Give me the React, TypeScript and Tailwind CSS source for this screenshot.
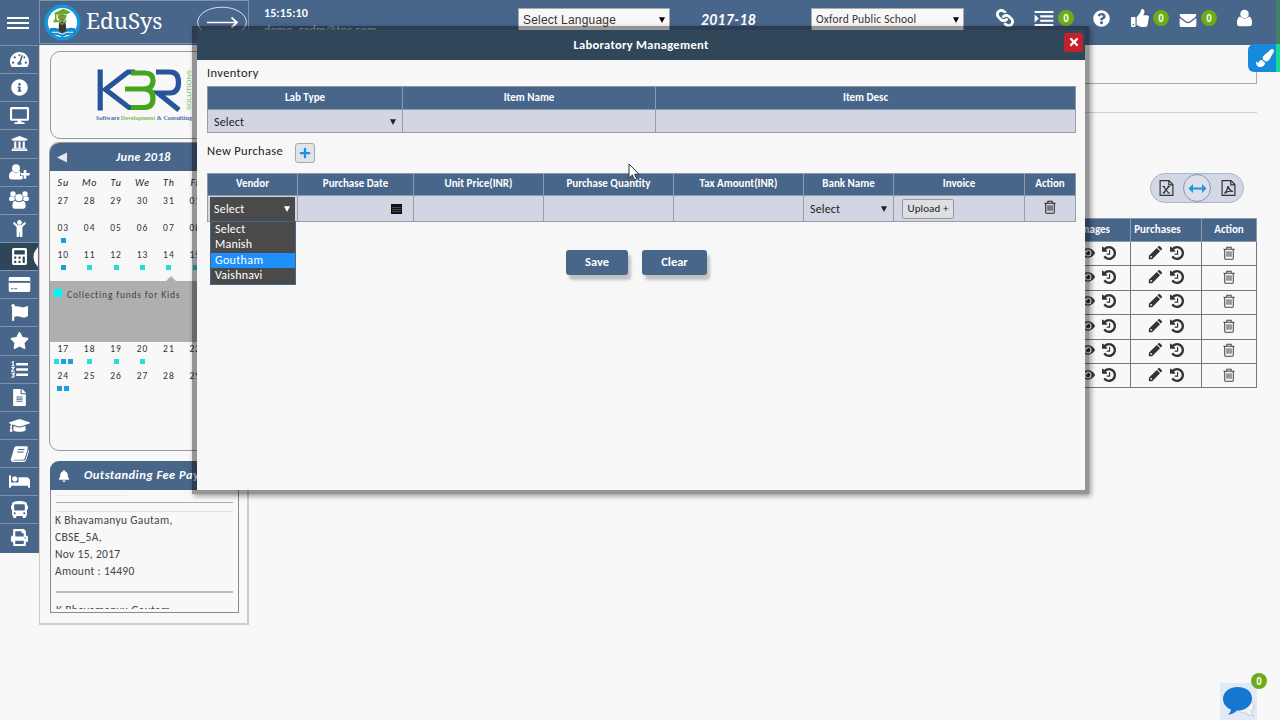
import React from "react";
import {
  FaTachometerAlt, FaInfoCircle, FaDesktop, FaUniversity, FaChild, FaCalculator,
  FaFlag, FaStar, FaFileAlt, FaGraduationCap, FaBed, FaBus, FaPrint, FaLink,
  FaQuestionCircle, FaThumbsUp, FaPaintBrush, FaEye, FaBell, FaPlus, FaTimes,
} from "react-icons/fa";

type IconProps = { className?: string };

function TiltedBook({ className }: IconProps) {
  return (
    <svg viewBox="0 0 20 18" className={className} fill="currentColor">
      <path d="M7 1.2h10.2c1.3 0 2 .9 1.600 2.200l-3 10.400c-.3 1.100-1 1.700-2.100 1.700H4.200c-.7 0-.9.9-.1.900h10.200c1.300 0 2-.7 2.300-1.700l2.900-9.600c.6.700.5 1.300.3 2l-2.600 8.600c-.4 1.400-1.500 2.300-3 2.300H3.500C1.600 18 .6 16.600 1 14.900L4.300 3.300C4.700 2 5.600 1.200 7 1.200z" />
      <path d="M8.300 4.700h7M7.500 7.400h7" stroke="#48658a" strokeWidth="1.100" />
    </svg>
  );
}

function Bin({ className }: IconProps) {
  return (
    <svg viewBox="0 0 14 16" className={className} fill="none" stroke="currentColor" strokeWidth="1.200">
      <path d="M.5 3.500h13M4.500 3.500V1.200h5v2.300M2 3.500V14q0 1.300 1.300 1.300h7.400Q12 15.300 12 14V3.500M4.700 6v6.500M7 6v6.500M9.300 6v6.500" />
    </svg>
  );
}

function History({ className }: IconProps) {
  return (
    <svg viewBox="128 128 1536 1536" className={className} fill="currentColor">
      <path d="M1664 896q0 156-61 298t-164 245-245 164-298 61q-172 0-327-72.500t-264-204.500q-7-10-6.500-22.500t8.500-20.500l137-138q10-9 25-9 16 2 23 12 73 95 179 147t225 52q104 0 198.500-40.500t163.500-109.500 109.500-163.500 40.500-198.500-40.500-198.500-109.500-163.500-163.500-109.500-198.500-40.500q-98 0-188 35.500t-160 101.500l137 138q31 30 14 69-17 40-59 40h-448q-26 0-45-19t-19-45v-448q0-42 40-59 39-17 69 14l130 129q107-101 244.500-156.500t284.500-55.500q156 0 298 61t245 164 164 245 61 298zm-640-288v448q0 14-9 23t-23 9h-320q-14 0-23-9t-9-23v-64q0-14 9-23t23-9h224v-352q0-14 9-23t23-9h64q14 0 23 9t9 23z" />
    </svg>
  );
}

function Pencil({ className }: IconProps) {
  return (
    <svg viewBox="0 0 16 16" className={className} fill="currentColor">
      <path d="M1 11.200L10 2.200 13.800 6l-9 9H1zM2.300 12l1.700 1.700 1-1L3.300 11zM10.800 1.400l1-1q.9-.7 1.800 0l2 2q.8.9 0 1.800l-1 1z" fillRule="evenodd" />
    </svg>
  );
}

function Person({ className }: IconProps) {
  return (
    <svg viewBox="0 0 18 18" className={className} fill="currentColor">
      <circle cx="9" cy="4.800" r="4.500" />
      <path d="M4.200 7.500Q1 8.500 1 14.500 1 17.700 4 17.700h10q3 0 3-3.200 0-6-3.200-7Q9 12 4.200 7.500z" />
    </svg>
  );
}

function PersonAdd({ className }: IconProps) {
  return (
    <svg viewBox="0 0 21 16" className={className} fill="currentColor">
      <circle cx="7" cy="4.300" r="4" />
      <path d="M3.300 7Q0 8 0 12.500 0 15.500 2.700 15.500h9q1.300 0 2-.8V12H11V8.500h1Q11 7 10.700 7 7 10.500 3.300 7zM14.700 6h2.600v3H20.500v2.600h-3.200v3.200h-2.600v-3.200h-3V9h3z" />
    </svg>
  );
}

function People({ className }: IconProps) {
  return (
    <svg viewBox="0 0 20 18" className={className} fill="currentColor">
      <circle cx="4" cy="2.900" r="2.700" /><circle cx="16" cy="2.900" r="2.700" />
      <path d="M1.800 5.200Q0 5.500 0 8.300 0 10 1.600 10h2.700Q5 9 6 8.700 5 7 5.600 5.200 3.500 6.500 1.800 5.200zM18.200 5.200Q20 5.500 20 8.300 20 10 18.400 10h-2.700Q15 9 14 8.700 15 7 14.400 5.200 16.500 6.500 18.200 5.200z" />
      <circle cx="10" cy="6.600" r="3.700" />
      <path d="M6.200 9.700Q3.400 10 3.400 15q0 2.800 2.600 2.800h8q2.600 0 2.600-2.800 0-5-2.800-5.300Q10 13 6.200 9.700z" />
    </svg>
  );
}

function Card({ className }: IconProps) {
  return (
    <svg viewBox="0 0 23 16" className={className}>
      <rect width="23" height="16" rx="1.500" fill="currentColor" />
      <path d="M0 5.200h23" stroke="#48658a" strokeWidth="2" /><path d="M2.500 12.500h2.500M6 12.500h3" stroke="#48658a" />
    </svg>
  );
}

function Numbered({ className }: IconProps) {
  return (
    <svg viewBox="0 0 18 18" className={className} fill="none" stroke="currentColor">
      <path d="M5.500 3.500H18M5.500 9H18M5.500 14.500H18" strokeWidth="2.700" />
      <path d="M.8 1.500L2.300.8V5M.5 5h3.400M.5 7h2.600L.8 10.800H4M.5 13h3L2 14.500q1.800 0 1.500 1.500-.5 1.500-3 .8" strokeWidth="1.200" />
    </svg>
  );
}

function IndentLines({ className }: IconProps) {
  return (
    <svg viewBox="0 0 20 16" className={className} fill="currentColor">
      <path d="M0 0h20v2.200H0zM6 4.600h14v2.200H6zM6 9.200h14v2.200H6zM0 13.800h20V16H0zM0 3.700L4.500 8 0 12.300z" />
    </svg>
  );
}

function Mail({ className }: IconProps) {
  return (
    <svg viewBox="0 0 18 14" className={className} fill="currentColor">
      <path d="M1 0h16q1 0 1 1.300-.3 1.500-2 2.700L11 7.800q-2 1.300-4 0L2 4Q.2 2.700 0 1.300 0 0 1 0zM0 4.200l6.500 4.900q2.500 1.500 5 0L18 4.200V12.500Q18 14 16.500 14h-15Q0 14 0 12.500z" />
    </svg>
  );
}

function Doc({ className, children }: IconProps & { children?: React.ReactNode }) {
  return (
    <svg viewBox="0 0 14 16" className={className} fill="none" stroke="currentColor" strokeWidth="1.200">
      <path d="M.6.600h8.900l3.900 3.900v10.900H.6zM9.300.8v4h4" />
      {children}
    </svg>
  );
}

const Tri = ({ className }: IconProps) => (
  <svg viewBox="0 0 6 6" className={"h-[6px] w-[6px] " + (className || "")} fill="currentColor"><path d="M0 .3h6L3 6z" /></svg>
);

const sidebar = [
  FaTachometerAlt, FaInfoCircle, FaDesktop, FaUniversity, PersonAdd, People, FaChild, FaCalculator,
  Card, FaFlag, FaStar, Numbered, FaFileAlt, FaGraduationCap, TiltedBook, FaBed, FaBus, FaPrint,
];

function Badge({ className }: IconProps) {
  return (
    <span className={"flex h-4 w-4 items-center justify-center rounded-full bg-[#6dab18] font-['Liberation_Sans'] text-[10px] font-bold text-white " + (className || "")}>0</span>
  );
}

function Header() {
  return (
    <header className="flex h-[45px] shrink-0 bg-[#48658a] text-white">
      <div className="flex w-[39px] flex-col gap-[3px] pl-[7px] pt-[17px]">
        <i className="h-[2px] w-[22px] bg-white" /><i className="h-[2px] w-[22px] bg-white" /><i className="h-[2px] w-[22px] bg-white" />
      </div>
      <div className="flex h-[44px] w-[210px] border border-[#8194ae] pl-[4px]">
        <svg viewBox="0 0 38 38" className="mt-[3px] h-[37px] w-[37px]">
          <circle cx="19" cy="19" r="18.500" fill="#1795dc" /><circle cx="19" cy="19" r="15" fill="#fff" />
          <path d="M6 25q7-2 12.500 3Q25 23 32 25v7q-7-2-13 2-6-4-13-2z" fill="#1686c8" />
          <path d="M7.500 23q6-.5 11 3.500 5-4 11-3.500M8 29q6-1 10.500 2Q24 28 30 29" fill="none" stroke="#fff" strokeWidth="1" />
          <path d="M15.500 18h6.500l1 9-4.300 3-3.700-3z" fill="#3c3530" />
          <circle cx="18.500" cy="14" r="3.600" fill="#9b704e" />
          <path d="M10 9.500L20 5l7.500 3.500-9 4.500z M14 11v3.500q4 2 9-.5V10.500" fill="#5fae26" />
          <path d="M12 10v5l-1.500 3h3L12 15M14 17l4.500 4 4.500-4" fill="none" stroke="#5fae26" strokeWidth="1.400" />
        </svg>
        <span className="ml-[5px] mt-[4px] w-[111px] font-['Noto_Serif','DejaVu_Serif',serif] text-[22.500px] leading-[32px] tracking-[-0.050px]">EduSys</span>
        <svg viewBox="0 0 50 32" className="mt-[5px] h-[32px] w-[50px]" fill="none" stroke="#fff">
          <ellipse cx="25" cy="16" rx="24.300" ry="14.800" strokeWidth=".8" />
          <path d="M10 16.500h29M34.500 11.500l5.500 5-5.500 5" strokeWidth="1.700" />
        </svg>
      </div>
      <div className="ml-[15px] w-[254px] pt-[5px] leading-[16px]">
        <div className="text-[12px] font-bold tracking-[0.100px]">15:15:10</div>
        <div className="pt-px text-[12px] tracking-[0.100px] text-[#c0cad8]">demo_cadm@tnc.com</div>
      </div>
      <div className="mt-[8px] flex h-[24px] w-[152px] items-center justify-between border border-[#aaa] bg-[#f8f8f8] px-[4px] font-['Liberation_Sans'] text-[12px] tracking-[0.200px] text-[#333]">
        Select Language <Tri className="text-black" />
      </div>
      <div className="w-[141px] pl-[31px] pt-[10px] text-[15px] font-bold italic leading-[20px] tracking-[0.700px]">2017-18</div>
      <div className="mt-[8px] flex h-[24px] w-[153px] items-center justify-between border border-[#aaa] bg-[#f8f8f8] px-[4px] text-[11.500px] tracking-[0.220px] text-[#333]">
        Oxford Public School <Tri className="text-black" />
      </div>
      <div className="ml-[32px] flex h-[36px] items-center">
        <FaLink className="w-[18px] rotate-90 text-[18px]" />
        <IndentLines className="ml-[20px] h-[15px] w-[20px]" />
        <Badge className="ml-[4px]" />
        <FaQuestionCircle className="ml-[19px] text-[17px]" />
        <FaThumbsUp className="ml-[21px] text-[18px]" />
        <Badge className="ml-[4px]" />
        <Mail className="ml-[10px] mt-[4px] h-[13px] w-[18px]" />
        <Badge className="ml-[4px]" />
        <Person className="ml-[19px] h-[18px] w-[17px]" />
      </div>
      <i className="ml-auto w-[4px] bg-[#3f8066]" />
    </header>
  );
}

function Sidebar() {
  return (
    <nav className="h-[508px] w-[39px] shrink-0 border-r border-[#6b5a78] bg-[#48658a] text-white">
      {sidebar.map((Icon, i) => (
        <div key={i} className={"relative flex h-[28.150px] items-center justify-center border-t border-[#7f93ad] " + (i === 7 ? "bg-[#2f4659]" : "")}>
          <Icon className={i === 8 ? "h-[15px] w-[23px]" : i === 4 ? "h-[16px] w-[21px]" : i === 5 ? "h-[18px] w-[20px]" : i === 13 || i === 15 ? "h-[21px] w-[21px]" : "h-[17px] w-[19px]"} />
          {i === 7 && <svg viewBox="0 0 6 20" className="absolute right-0 top-[4px] h-[20px] w-[6px]"><path d="M6 0v20L3 16Q0 10 3 4z" fill="#f7f7f7" /></svg>}
        </div>
      ))}
    </nav>
  );
}

function School() {
  return (
    <div className="ml-[10px] mt-[6px] h-[88px] w-[190px] rounded-[10px] border border-[#999] pl-[45px] pt-[17px]">
      <svg viewBox="0 0 100 54" className="h-[54px] w-[100px] overflow-visible">
        <g fill="none" strokeWidth="5.200">
          <path d="M4.200 .5v41" stroke="#28549a" />
          <path d="M39 3H32L9.500 20.500 33 38.500h8" stroke="#28549a" />
          <path d="M60 3h14q8.500 0 8.500 10.500T74 24H62l21 17" stroke="#28549a" />
          <path d="M35 4h14q8 0 8 7.500 0 8.500-9 8.500H29h19q9 0 9 9.500 0 9-9 9H35" stroke="#45a51f" />
        </g>
        <text x="95" y="41" transform="rotate(-90 95 41)" textLength="40" lengthAdjust="spacingAndGlyphs" fontFamily="Lato" fontSize="6.500" fill="#6fb84c">SOLUTIONS</text>
        <text x="0" y="50.500" textLength="96" lengthAdjust="spacingAndGlyphs" fontFamily="Liberation Serif" fontWeight="bold" fontSize="6" fill="#4a6da6">Software <tspan fill="#7cbf55">Development</tspan> &amp; Consulting</text>
      </svg>
    </div>
  );
}

const C = "bg-[#25dce0]";
const B = "bg-[#1b9fe3]";
type Day = [string, string[]];
const weeks: Day[][] = [
  [["27", []], ["28", []], ["29", []], ["30", []], ["31", []], ["01", []], ["02", []]],
  [["03", [B]], ["04", []], ["05", []], ["06", []], ["07", []], ["08", []], ["09", []]],
  [["10", [B]], ["11", [C]], ["12", [C]], ["13", [C]], ["14", [C]], ["15", [C]], ["16", []]],
  [["17", [C, B, B]], ["18", [C]], ["19", [C]], ["20", [C]], ["21", []], ["22", []], ["23", []]],
  [["24", [B, B]], ["25", []], ["26", []], ["27", []], ["28", []], ["29", []], ["30", []]],
];

function Week({ days }: { days: Day[] }) {
  return (
    <div className="grid h-[27px] w-[185px] grid-cols-7">
      {days.map(([n, dots], i) => (
        <div key={i} className="flex flex-col items-center">
          <span className="h-[17px] text-[9.500px] leading-[15px] tracking-[1px] text-[#333]">{n}</span>
          <span className="flex gap-[2px]">{dots.map((d, k) => <i key={k} className={"h-[5px] w-[5px] " + d} />)}</span>
        </div>
      ))}
    </div>
  );
}

function Calendar() {
  return (
    <div className="ml-[9px] mt-[3px] h-[309px] w-[191px] overflow-hidden rounded-[10px] border border-[#999]">
      <div className="flex h-[28px] items-center bg-[#48658a] text-white">
        <svg viewBox="0 0 10 10" className="ml-[7px] h-[11px] w-[10px]" fill="#e3e6f3"><path d="M10 0v10L0 5z" /></svg>
        <span className="ml-[49px] text-[12.500px] font-bold italic tracking-[0.350px]">June 2018</span>
      </div>
      <div className="grid h-[23px] w-[185px] grid-cols-7 pt-[4px] text-center text-[10px] font-medium italic leading-[16px] tracking-[0.800px] text-[#222]">
        {["Su", "Mo", "Tu", "We", "Th", "Fr", "Sa"].map((d) => <span key={d}>{d}</span>)}
      </div>
      {weeks.slice(0, 3).map((w, i) => <Week key={i} days={w} />)}
      <div className="relative mt-[6px] flex h-[61px] items-start bg-[#afafaf] pl-[4px] pt-[8px]">
        <svg viewBox="0 0 10 5" className="absolute left-[116px] top-[-5px] h-[5px] w-[10px]" fill="#afafaf"><path d="M0 5l5-5 5 5z" /></svg>
        <i className="h-[8px] w-[8px] bg-[#00f5fa]" />
        <span className="ml-[5px] whitespace-nowrap text-[9.500px] leading-[12px] tracking-[0.820px] text-[#444]">Collecting funds for Kids</span>
      </div>
      {weeks.slice(3).map((w, i) => <Week key={i} days={w} />)}
    </div>
  );
}

function Fees() {
  return (
    <div className="ml-[10px] mt-[10px] w-[189px]">
      <div className="flex h-[29px] items-center rounded-t-[9px] bg-[#48658a] pl-[8px] text-white">
        <FaBell className="text-[12px]" />
        <span className="ml-[14px] whitespace-nowrap text-[12.500px] font-bold italic tracking-[0.450px]">Outstanding Fee Pay</span>
      </div>
      <div className="h-[123px] overflow-hidden border border-t-0 border-[#8a8a8a] px-[5px] text-[11.500px] leading-[17px] tracking-[0.320px] text-[#444]">
        <div className="flex h-[12px] flex-col pt-[4px]"><span className="h-[2px] w-[70px] border-b border-dotted border-[#ddd]" /></div>
        <hr className="border-[#aaa]" />
        <hr className="mt-[8px] border-[#ddd]" />
        <div className="-ml-px">K Bhavamanyu Gautam,</div>
        <div className="-ml-px">CBSE_5A,</div>
        <div className="-ml-px">Nov 15, 2017</div>
        <div className="-ml-px">Amount : 14490</div>
        <hr className="mt-[11px] border-t-2 border-[#bbb]" />
        <div className="mt-[12px] h-[4px] overflow-hidden leading-[11px]">K Bhavamanyu Gautam,</div>
      </div>
    </div>
  );
}

function MainPane() {
  return (
    <main className="flex w-[1008px] flex-col items-end">
      <div className="h-[39px] w-full border-b border-r border-[#aaa]" />
      <div className="h-[29px] w-full border-b border-[#d0d0d0]" />
      <div className="mr-[13px] mt-[60px] flex h-[30px] w-[94px] items-center rounded-full border border-[#a9b6cc] bg-[#d3d8e6] pl-[8px] text-[#333]">
        <Doc className="h-[16px] w-[15px]"><path d="M4 6.500l5 6.500M9.300 6.500L4 13M3 6.500h2.500M8 6.500h2.500M3 13h2.500M8 13h2.500" /></Doc>
        <span className="ml-[9px] flex h-[28px] w-[28px] items-center justify-center rounded-full border border-[#7e9abd] bg-[#dde0e8] text-[#1d97e0]">
          <svg viewBox="0 0 20 10" className="h-[9px] w-[19px]"><path d="M5 0v4h10V0l5 5-5 5V6H5v4L0 5z" fill="currentColor" /></svg>
        </span>
        <Doc className="ml-[10px] h-[16px] w-[15px]"><path d="M3 13.500Q6 11 6.500 6q1 4.500 5 5.500-5-1-8.500 2" /></Doc>
      </div>
      <table className="mt-[15px] w-[900px] table-fixed border-collapse text-[11px] text-[#333]">
        <colgroup><col /><col className="w-[100px]" /><col className="w-[71px]" /><col className="w-[55px]" /></colgroup>
        <thead><tr className="h-[23px] bg-[#48658a] text-white">
          <th className="border border-[#8e9aac]" />
          <th className="border border-[#8e9aac] pr-[20px] text-right">Damages</th>
          <th className="border border-[#8e9aac] pr-[17px] tracking-[0.100px]">Purchases</th>
          <th className="border border-[#8e9aac]">Action</th>
        </tr></thead>
        <tbody>{[0, 1, 2, 3, 4, 5].map((r) => (
          <tr key={r} className="h-[24.400px]">
            <td className="border border-[#777]" />
            <td className="border border-[#777] p-0 pb-[2px]"><div className="flex justify-end gap-[7px] pr-[14px]"><FaEye className="h-[14px] text-[14px]" /><History className="h-[14px] w-[14px]" /></div></td>
            <td className="border border-[#777] p-0 pb-[2px]"><div className="flex items-center justify-center gap-[8px]"><Pencil className="h-[14px] w-[14px]" /><History className="h-[14px] w-[14px]" /></div></td>
            <td className="border border-[#777] p-0 pb-[2px]"><Bin className="mx-auto h-[14px] w-[12px] text-[#444]" /></td>
          </tr>
        ))}</tbody>
      </table>
    </main>
  );
}

const th = "border border-[#8d98aa] p-0 font-bold";
const td = "border border-[#9a9caa] p-0";

function Modal() {
  return (
    <div className="absolute left-[192px] top-[26px] h-[468px] w-[897px] border-x-[4px] border-y-[4px] border-l-[5px] border-black/40 bg-clip-padding shadow-[2px_2px_5px_rgba(0,0,0,0.400)]">
      <div className="flex h-full flex-col bg-[#f7f7f8]">
        <div className="flex h-[30px] shrink-0 items-center bg-[#30475a] text-white">
          <span className="ml-auto w-[136px] whitespace-nowrap text-center text-[12.500px] font-bold leading-[16px] tracking-[0.300px]">Laboratory Management</span>
          <span className="mb-[6px] ml-[355px] mr-[2px] flex h-[19px] w-[19px] items-center justify-center rounded-[3px] bg-[#c5202b]"><FaTimes className="text-[12px]" /></span>
        </div>
        <div className="pl-[10px] pr-[9px] text-[#222]">
          <h2 className="mt-[5px] h-[21px] text-[12.500px] leading-[16px] tracking-[0.380px]">Inventory</h2>
          <table className="w-[869px] table-fixed border-collapse text-[11px]">
            <colgroup><col className="w-[195px]" /><col className="w-[253px]" /><col /></colgroup>
            <thead><tr className="h-[23px] bg-[#48658a] text-white"><th className={th}>Lab Type</th><th className={th}>Item Name</th><th className={th}>Item Desc</th></tr></thead>
            <tbody><tr className="h-[23px] bg-[#d2d6e3]">
              <td className={td}><div className="flex items-center justify-between px-[6px] pt-px text-[12px] leading-[16px] tracking-[0.150px]">Select<Tri /></div></td><td className={td} /><td className={td} />
            </tr></tbody>
          </table>
          <div className="flex h-[40px] items-center text-[12.500px] tracking-[0.330px]">
            <span className="mb-[3px] w-[88px]">New Purchase</span>
            <button className="mb-px flex h-[20px] w-[20px] items-center justify-center rounded-[3px] border border-[#a5a8ad] bg-[#e0e3e9] text-[#1b92dc]"><FaPlus className="text-[12px]" /></button>
          </div>
          <table className="w-[869px] table-fixed border-collapse text-[11px]">
            <colgroup>
              <col className="w-[90px]" /><col className="w-[116px]" /><col className="w-[130px]" /><col className="w-[130px]" />
              <col className="w-[130px]" /><col className="w-[90px]" /><col className="w-[131px]" /><col />
            </colgroup>
            <thead><tr className="h-[22px] bg-[#48658a] text-white">
              {["Vendor", "Purchase Date", "Unit Price(INR)", "Purchase Quantity", "Tax Amount(INR)", "Bank Name", "Invoice", "Action"].map((t) => <th key={t} className={th}>{t}</th>)}
            </tr></thead>
            <tbody><tr className="h-[26px] bg-[#d2d6e3]">
              <td className={td}>
                <div className="relative ml-[2px] flex h-[24px] w-[85px] items-center justify-between bg-[#4a4a4a] pl-[4px] pr-[5px] text-[12px] tracking-[0.200px] text-white">
                  Select<Tri />
                  <ul className="absolute left-0 top-[24px] z-10 w-[86px] border border-[#48658a] bg-[#4a4a4a] leading-[15.500px]">
                    <li className="pl-[4px]">Select</li><li className="pl-[4px]">Manish</li>
                    <li className="bg-[#1e8ffb] pl-[4px] tracking-[0.350px]">Goutham</li><li className="pl-[4px]">Vaishnavi</li>
                  </ul>
                </div>
              </td>
              <td className={td}>
                <svg viewBox="0 0 11 11" className="ml-auto mr-[11px] h-[11px] w-[11px]"><path d="M0 1h11v10H0z" fill="#111" /><path d="M1 4.500h9M1 6.500h9M1 8.500h9" stroke="#777" strokeWidth=".6" /></svg>
              </td>
              <td className={td} /><td className={td} /><td className={td} />
              <td className={td}><div className="flex items-center justify-between px-[6px] text-[12px] tracking-[0.150px]">Select<Tri /></div></td>
              <td className={td}><button className="ml-[8px] block h-[20px] w-[52px] whitespace-nowrap rounded-[2px] border border-[#999] bg-[#dedfe2] text-[11px] leading-[17px] tracking-[0.100px]">Upload +</button></td>
              <td className={td}><Bin className="mx-auto mb-[4px] h-[14px] w-[12px]" /></td>
            </tr></tbody>
          </table>
          <div className="ml-[359px] mt-[28px] flex gap-[14px] text-[12.500px] font-bold text-white">
            <button className="h-[25px] w-[62px] rounded-[3px] bg-[#48658a] pb-px shadow-[3px_5px_3px_rgba(0,0,0,0.220)]">Save</button>
            <button className="h-[25px] w-[65px] rounded-[3px] bg-[#48658a] pb-px shadow-[3px_5px_3px_rgba(0,0,0,0.220)]">Clear</button>
          </div>
        </div>
      </div>
    </div>
  );
}

export default function App() {
  return (
    <div className="relative h-[720px] w-[1280px] overflow-hidden bg-[#f8f8f8] font-['Carlito','Lato',sans-serif]">
      <Header />
      <div className="flex items-start">
        <Sidebar />
        <aside className="h-[580px] w-[210px] shrink-0 border-b-2 border-l border-r-2 border-[#ccc]">
          <School />
          <Calendar />
          <Fees />
        </aside>
        <MainPane />
      </div>
      <div className="absolute left-[1248px] top-[44px] flex h-[28px] w-[32px] items-center overflow-hidden rounded-l-[6px] bg-[#168bdc] text-white">
        <FaPaintBrush className="ml-[8px] text-[18px]" />
        <i className="ml-auto h-full w-[4px] bg-[#12dc94]" />
      </div>
      <Modal />
      <svg viewBox="0 0 12 18" className="absolute left-[628px] top-[163px] h-[18px] w-[12px]"><path d="M1 1v14l3.300-3 2.200 5 2.300-1-2.200-4.800H11z" fill="#fff" stroke="#333" strokeWidth="1" /></svg>
      <div className="absolute left-[1220px] top-[683px] h-[37px] w-[37px] bg-[#e2e9f8]">
        <svg viewBox="0 0 37 37" className="h-full w-full">
          <path d="M24 19q11-3 10 6-1 3-3 3 0 3 3 5-5 0-8-3-8 0-8-5z" fill="#f4f4f4" stroke="#bbb" strokeWidth=".7" />
          <path d="M17.500 4C27 4 32 9 32 15.500S26 28 17 27.500q-4 4-9 4 3-2 3-5-8-3-8-10.500C3 9 9 4 17.500 4z" fill="#1577cf" />
        </svg>
      </div>
      <Badge className="absolute left-[1251px] top-[673px]" />
    </div>
  );
}
